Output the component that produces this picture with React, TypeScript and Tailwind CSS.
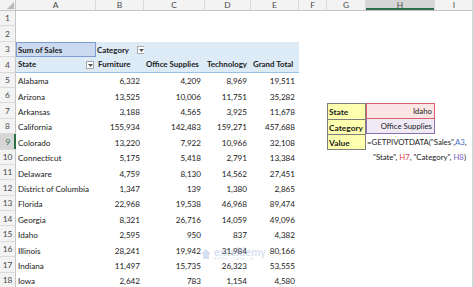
import React from "react";

const COLS = ["A", "B", "C", "D", "E", "F", "G", "H", "I"];
const WIDTHS = [
  "w-[80px]",
  "w-[48px]",
  "w-[61px]",
  "w-[46px]",
  "w-[48px]",
  "w-[28px]",
  "w-[39px]",
  "w-[69px]",
  "w-[39px]",
];

const DATA: string[][] = [
  ["Alabama", "6,332", "4,209", "8,969", "19,511"],
  ["Arizona", "13,525", "10,006", "11,751", "35,282"],
  ["Arkansas", "3,188", "4,565", "3,925", "11,678"],
  ["California", "155,934", "142,483", "159,271", "457,688"],
  ["Colorado", "13,220", "7,922", "10,966", "32,108"],
  ["Connecticut", "5,175", "5,418", "2,791", "13,384"],
  ["Delaware", "4,759", "8,130", "14,562", "27,451"],
  ["District of Columbia", "1,347", "139", "1,380", "2,865"],
  ["Florida", "22,968", "19,538", "46,968", "89,474"],
  ["Georgia", "8,321", "26,716", "14,059", "49,096"],
  ["Idaho", "2,595", "950", "837", "4,382"],
  ["Illinois", "28,241", "19,942", "31,984", "80,166"],
  ["Indiana", "11,497", "15,735", "26,323", "53,555"],
  ["Iowa", "2,642", "783", "1,154", "4,580"],
];

function Dropdown() {
  return (
    <span className="inline-flex h-[8px] w-[8px] items-center justify-center border border-[#a9a9a9] bg-white">
      <svg width="5" height="3" viewBox="0 0 5 3">
        <polygon points="0,0 5,0 2.5,3" fill="#555" />
      </svg>
    </span>
  );
}

function Cell({
  i,
  className = "",
  children,
}: {
  i: number;
  className?: string;
  children?: React.ReactNode;
}) {
  return (
    <div
      className={`relative flex h-full shrink-0 items-center whitespace-nowrap pt-[2px] ${WIDTHS[i]} ${className}`}
    >
      {children}
    </div>
  );
}

function rowCells(r: number): React.ReactNode[] {
  const cells: React.ReactNode[] = [];
  for (let i = 0; i < 9; i++) {
    let node: React.ReactNode = <Cell key={i} i={i} />;
    if (r === 3 && i < 5) {
      if (i === 0) {
        node = (
          <Cell key={i} i={i} className="border border-[#7f9dd1] bg-[#cbdaf0] pl-[1px] text-[7.9px] font-bold">
            Sum of Sales
          </Cell>
        );
      } else if (i === 1) {
        node = (
          <Cell key={i} i={i} className="bg-[#ddebf7] pl-[1px] text-[7.9px] font-bold">
            <span>Category</span>
            <span className="ml-[8px] flex">
              <Dropdown />
            </span>
          </Cell>
        );
      } else {
        node = <Cell key={i} i={i} className="bg-[#ddebf7]" />;
      }
    } else if (r === 4 && i < 5) {
      const labels = ["State", "Furniture", "Office Supplies", "Technology", "Grand Total"];
      node = (
        <Cell
          key={i}
          i={i}
          className="border-b border-[#9bc2e6] bg-[#ddebf7] pl-[2px] text-[7.9px] font-bold"
        >
          <span>{labels[i]}</span>
          {i === 0 && (
            <span className="absolute right-[2px] top-[4px] flex">
              <Dropdown />
            </span>
          )}
        </Cell>
      );
    } else if (r >= 5 && i < 5) {
      const v = DATA[r - 5][i];
      node =
        i === 0 ? (
          <Cell key={i} i={i} className="pl-[2px]">
            {v}
          </Cell>
        ) : (
          <Cell key={i} i={i} className="justify-end pr-[4px]">
            {v}
          </Cell>
        );
    } else if (r >= 7 && r <= 9 && i === 6) {
      const labels = ["State", "Category", "Value"];
      node = (
        <Cell
          key={i}
          i={i}
          className={`border-x border-t border-[#7f7f7f] bg-[#ffffb0] pl-[1px] text-[8.4px] font-bold ${
            r === 9 ? "border-b" : ""
          }`}
        >
          {labels[r - 7]}
        </Cell>
      );
    } else if (r === 7 && i === 7) {
      node = (
        <Cell
          key={i}
          i={i}
          className="justify-end border border-[#d9626b] bg-[#fbe6e6] pr-[2px] text-[7.8px]"
        >
          Idaho
        </Cell>
      );
    } else if (r === 8 && i === 7) {
      node = (
        <Cell
          key={i}
          i={i}
          className="justify-end border-x border-b border-[#8a71b0] bg-[#efeaf6] pr-[2px] text-[7.8px]"
        >
          Office Supplies
        </Cell>
      );
    } else if (r === 9 && i === 7) {
      node = (
        <Cell key={i} i={i} className="pl-[1px] text-[7.8px]">
          <span>
            =GETPIVOTDATA("Sales",<span className="text-[#3d6fc6]">A3</span>,
          </span>
        </Cell>
      );
    } else if (r === 10 && i === 7) {
      node = (
        <Cell key={i} i={i} className="pl-[7px] text-[7.8px]">
          <span>
            "State", <span className="text-[#d9424b]">H7</span>, "Category",{" "}
            <span className="text-[#8060b8]">H8</span>)
          </span>
        </Cell>
      );
    }
    cells.push(node);
  }
  return cells;
}

export default function App() {
  const rows = Array.from({ length: 18 }, (_, k) => k + 1);
  return (
    <div
      className="relative h-[287px] w-[474px] overflow-hidden bg-white text-[8.1px] leading-none text-[#1b1b1b]"
      style={{ fontFamily: "Lato, 'Liberation Sans', sans-serif" }}
    >
      <div className="flex h-full flex-col border-r-2 border-[#d6d6d6]">
        {/* column header */}
        <div className="flex h-[11px] shrink-0 border-b border-[#c6c6c6] bg-[#f3f3f3] text-[8.4px] text-[#4a4a4a]">
          <div className="relative h-full w-[16px] shrink-0 border-r border-[#c6c6c6]">
            <svg className="absolute bottom-[1px] right-[1px]" width="7" height="7" viewBox="0 0 7 7">
              <polygon points="7,0 7,7 0,7" fill="#b8b8b8" />
            </svg>
          </div>
          {COLS.map((c, i) => (
            <div
              key={c}
              className={`flex h-full shrink-0 items-center justify-center border-r border-[#dadada] ${WIDTHS[i]} ${
                c === "H" ? "bg-[#d6d6d6] shadow-[inset_0_-2px_0_#2d6e4a]" : ""
              }`}
            >
              {c}
            </div>
          ))}
        </div>
        {rows.map((r) => (
          <div key={r} className="flex h-[15.4px] shrink-0">
            <div
              className={`flex h-full w-[16px] shrink-0 items-center justify-center border-b border-[#dadada] pt-[1px] text-[8.4px] ${
                r === 9
                  ? "bg-[#d6d6d6] text-[#2d6e4a] shadow-[inset_-2px_0_0_#2d6e4a]"
                  : "border-r border-r-[#c6c6c6] bg-[#f3f3f3] text-[#4a4a4a]"
              }`}
            >
              {r}
            </div>
            {rowCells(r)}
          </div>
        ))}
      </div>
      {/* watermark */}
      <div className="pointer-events-none absolute left-[200px] top-[246px] flex items-center gap-[2px] opacity-30">
        <svg width="12" height="12" viewBox="0 0 12 12">
          <polygon points="6,1 11,6 9,6 9,11 3,11 3,6 1,6" fill="#7a9cd6" />
        </svg>
        <div className="flex flex-col items-start">
          <span className="text-[11px] font-bold leading-none text-[#7a9cd6]">exceldemy</span>
          <span className="text-[4px] leading-none tracking-[0.5px] text-[#7a9cd6]">
            EXCEL · DATA · BI
          </span>
        </div>
      </div>
    </div>
  );
}
